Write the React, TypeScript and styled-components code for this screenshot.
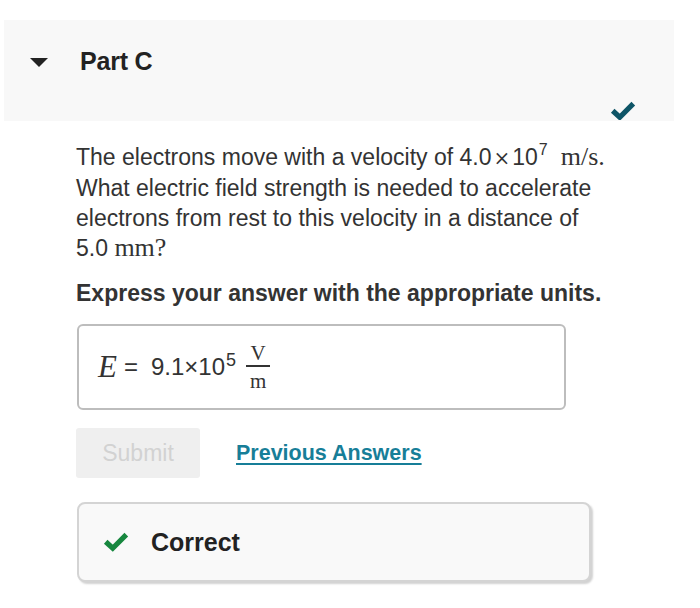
import React from 'react';
import styled, {createGlobalStyle} from 'styled-components';

const GlobalStyle = createGlobalStyle`
  html, body {
    margin: 0;
    padding: 0;
    background: #fff;
  }
  body {
    font-family: "Liberation Sans", Arial, sans-serif;
    color: #333;
  }
`

const Page = styled.div`
  width: 700px;
  height: 608px;
  padding-top: 20px;
  box-sizing: border-box;
  overflow: hidden;
`

const PartHeader = styled.div`
  margin-left: 4px;
  width: 670px;
  height: 101px;
  background: #f8f8f8;
  display: flex;
  flex-direction: column;
  justify-content: space-between;
  box-sizing: border-box;
  padding: 27px 38px 1px 26px;
`

const TitleRow = styled.div`
  display: flex;
  align-items: center;
  gap: 32px;
`

const Caret = styled.span`
  width: 0;
  height: 0;
  border-left: 9px solid transparent;
  border-right: 9px solid transparent;
  border-top: 9px solid #222;
  margin-top: 1px;
`

const PartTitle = styled.h2`
  margin: 0;
  font-size: 25px;
  font-weight: bold;
  color: #222;
  letter-spacing: -0.2px;
`

const StatusRow = styled.div`
  display: flex;
  justify-content: flex-end;
`

const Body = styled.div`
  padding: 21px 0 0 76px;
  width: 580px;
`

const Question = styled.p`
  margin: 0;
  font-size: 23px;
  line-height: 30px;
  color: #333;
  white-space: nowrap;
`

const Serif = styled.span`
  font-family: "Liberation Serif", "Times New Roman", serif;
  font-size: 26px;
`

const Times = styled.span`
  font-family: "DejaVu Serif", serif;
  font-weight: 300;
  font-size: 20px;
  margin: 0 2px;
`

const Sup = styled.sup<{$size: number; $lift: number}>`
  font-size: ${p => p.$size}px;
  vertical-align: ${p => p.$lift}px;
  line-height: 0;
  margin-left: 1px;
`

const Instruction = styled.p`
  margin: 15px 0 16px;
  font-size: 23px;
  line-height: 30px;
  font-weight: bold;
  color: #333;
  white-space: nowrap;
`

const AnswerBox = styled.div`
  width: 489px;
  height: 86px;
  box-sizing: border-box;
  border: 2px solid #bdbdbd;
  border-radius: 6px;
  display: flex;
  align-items: center;
  padding: 0 0 0 19px;
  margin-left: 1px;
  color: #333;
`

const Variable = styled.span`
  font-family: "Liberation Serif", "Times New Roman", serif;
  font-style: italic;
  font-size: 31px;
`

const Equals = styled.span`
  font-size: 24px;
  margin: 0 13px 0 7px;
`

const Value = styled.span`
  font-size: 24px;
`

const Fraction = styled.span`
  display: inline-flex;
  flex-direction: column;
  align-items: center;
  margin-left: 10px;
  font-family: "Liberation Serif", "Times New Roman", serif;
  font-size: 21px;
  line-height: 20px;
`

const FractionBar = styled.span`
  width: 24px;
  height: 1.5px;
  background: #333;
  margin: 2px 0 4px;
`

const ActionRow = styled.div`
  display: flex;
  align-items: center;
  gap: 36px;
  margin-top: 18px;
`

const SubmitButton = styled.button`
  width: 124px;
  height: 50px;
  border: none;
  border-radius: 3px;
  background: #efefef;
  color: #d2d2d2;
  font-family: "Liberation Sans", Arial, sans-serif;
  font-size: 23px;
  padding: 0;
`

const PrevLink = styled.a`
  font-size: 21.5px;
  font-weight: bold;
  color: #177e98;
  text-decoration: underline;
  text-underline-offset: 3px;
  text-decoration-thickness: 2px;
`

const Feedback = styled.div`
  margin: 24px 0 0 1px;
  width: 514px;
  height: 80px;
  box-sizing: border-box;
  border: 2px solid #d4d4d4;
  border-radius: 8px;
  background: #f9f9f9;
  box-shadow: 2px 2px 2px rgba(0, 0, 0, 0.18);
  display: flex;
  align-items: center;
  gap: 22px;
  padding-left: 24px;
`

const FeedbackText = styled.span`
  font-size: 25px;
  font-weight: bold;
  color: #222;
`

const Check: React.FC<{color: string; size: number}> = ({color, size}) => (
    <svg width={size} height={size * 0.75} viewBox="0 0 24 18">
        <path d="M2.5 9 L9 15 L21.5 2.5" fill="none" stroke={color} strokeWidth="4.8" strokeLinejoin="miter"/>
    </svg>
)

const App: React.FC = () => {
    return (
        <Page>
            <GlobalStyle/>
            <PartHeader>
                <TitleRow>
                    <Caret/>
                    <PartTitle>Part C</PartTitle>
                </TitleRow>
                <StatusRow>
                    <Check color="#0e5567" size={26}/>
                </StatusRow>
            </PartHeader>
            <Body>
                <Question>
                    The electrons move with a velocity of 4.0<Times>×</Times>10<Sup $size={16} $lift={10}>7</Sup>
                    <Serif>&nbsp;&nbsp;m/s.</Serif>
                    <br/>
                    What electric field strength is needed to accelerate
                    <br/>
                    electrons from rest to this velocity in a distance of
                    <br/>
                    5.0 <Serif>mm?</Serif>
                </Question>
                <Instruction>Express your answer with the appropriate units.</Instruction>
                <AnswerBox>
                    <Variable>E</Variable>
                    <Equals>=</Equals>
                    <Value>9.1×10<Sup $size={18} $lift={9}>5</Sup></Value>
                    <Fraction>
                        <span>V</span>
                        <FractionBar/>
                        <span>m</span>
                    </Fraction>
                </AnswerBox>
                <ActionRow>
                    <SubmitButton disabled>Submit</SubmitButton>
                    <PrevLink href="#">Previous Answers</PrevLink>
                </ActionRow>
                <Feedback>
                    <Check color="#17873f" size={26}/>
                    <FeedbackText>Correct</FeedbackText>
                </Feedback>
            </Body>
        </Page>
    );
};

export default App;
